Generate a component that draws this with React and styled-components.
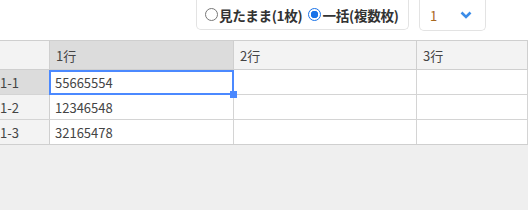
import React from 'react';
import styled, { createGlobalStyle } from 'styled-components';

const Global = createGlobalStyle`
  html, body {
    margin: 0;
    padding: 0;
    background: #efefef;
    font-family: "Noto Sans CJK JP", "Noto Sans", sans-serif;
  }
`;

const columns = ['1行', '2行', '3行'];
const rows = [
  { label: '1-1', values: ['55665554', '', ''] },
  { label: '1-2', values: ['12346548', '', ''] },
  { label: '1-3', values: ['32165478', '', ''] },
];

const App = () => (
  <Page>
    <Global />
    <Toolbar>
      <RadioGroup>
        <RadioLabel>
          <Radio />
          見たまま(1枚)
        </RadioLabel>
        <RadioLabel>
          <Radio checked />
          一括(複数枚)
        </RadioLabel>
      </RadioGroup>
      <Select>
        <span>1</span>
        <svg width="12" height="8" viewBox="0 0 12 8">
          <path d="M1.5 1.5 L6 6 L10.5 1.5" fill="none" stroke="#3b8ce8" strokeWidth="2.6" />
        </svg>
      </Select>
    </Toolbar>
    <Grid>
      <HeadRow>
        <Corner />
        {columns.map((c, i) => (
          <ColHead key={c} active={i === 0}>{c}</ColHead>
        ))}
      </HeadRow>
      {rows.map((r, ri) => (
        <Row key={r.label}>
          <RowHead active={ri === 0}>{r.label}</RowHead>
          {r.values.map((v, ci) => (
            <Cell key={ci} selected={ri === 0 && ci === 0}>
              {v}
              {ri === 0 && ci === 0 && <Handle />}
            </Cell>
          ))}
        </Row>
      ))}
    </Grid>
  </Page>
);

const Page = styled.div`
  width: 528px;
  height: 210px;
  overflow: hidden;
  background: #efefef;
`;

const Toolbar = styled.div`
  height: 40px;
  background: #fff;
  display: flex;
  align-items: flex-start;
  padding-left: 196px;
  box-sizing: border-box;
`;

const RadioGroup = styled.div`
  width: 213px;
  height: 30px;
  box-sizing: border-box;
  border: 1px solid #e3e3e3;
  border-top: none;
  border-radius: 0 0 5px 5px;
  display: flex;
  align-items: center;
  padding-left: 8px;
  gap: 6px;
`;

const RadioLabel = styled.label`
  display: flex;
  align-items: center;
  font-size: 13.6px;
  font-weight: bold;
  color: #333;
  letter-spacing: -0.3px;
`;

const Radio = styled.span`
  width: 13px;
  height: 13px;
  box-sizing: border-box;
  border-radius: 50%;
  border: 1px solid ${p => (p.checked ? '#1a73e8' : '#777')};
  margin-right: 1px;
  background: ${p => (p.checked ? 'radial-gradient(circle, #1a73e8 0 3.5px, #fff 4px)' : '#fff')};
`;

const Select = styled.div`
  margin-left: 10px;
  width: 67px;
  height: 31px;
  box-sizing: border-box;
  border: 1px solid #e3e3e3;
  border-top: none;
  border-radius: 0 0 5px 5px;
  display: flex;
  align-items: center;
  justify-content: space-between;
  padding: 0 13px 0 10px;
  font-size: 13px;
  color: #a8681f;
`;

const Grid = styled.div`
  border-top: 1px solid #cfcfcf;
  border-bottom: 1px solid #cfcfcf;
  background: #fff;
`;

const HeadRow = styled.div`
  display: grid;
  grid-template-columns: 50px 184px 183px 1fr;
  height: 28px;
  border-bottom: 1px solid #cfcfcf;
`;

const Row = styled.div`
  display: grid;
  grid-template-columns: 50px 184px 183px 1fr;
  height: 24px;
  border-bottom: 1px solid #d4d4d4;
  &:last-child {
    border-bottom: none;
  }
`;

const Corner = styled.div`
  background: #f3f3f3;
  border-right: 1px solid #cfcfcf;
`;

const ColHead = styled.div`
  background: ${p => (p.active ? '#dcdcdc' : '#f3f3f3')};
  border-right: 1px solid #cfcfcf;
  display: flex;
  align-items: center;
  padding-left: 6px;
  font-size: 13px;
  color: #444;
`;

const RowHead = styled.div`
  background: ${p => (p.active ? '#dcdcdc' : '#f3f3f3')};
  border-right: 1px solid #cfcfcf;
  display: flex;
  align-items: center;
  font-size: 13px;
  color: #444;
`;

const Cell = styled.div`
  position: relative;
  border-right: 1px solid #d4d4d4;
  display: flex;
  align-items: center;
  padding-left: 5px;
  font-size: 13px;
  color: #444;
  &::after {
    content: '';
    display: ${p => (p.selected ? 'block' : 'none')};
    position: absolute;
    inset: 0 -1px -1px -1px;
    border: 2px solid #4b89ff;
    pointer-events: none;
  }
`;

const Handle = styled.span`
  position: absolute;
  right: -4px;
  bottom: -4px;
  width: 7px;
  height: 7px;
  background: #4b89ff;
  z-index: 2;
`;

export default App;
